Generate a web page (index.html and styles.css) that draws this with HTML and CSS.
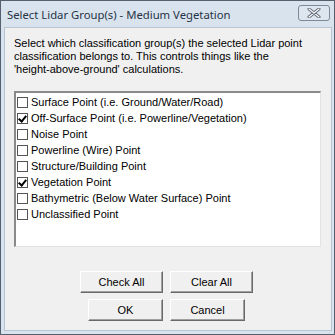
FILE: index.html
```html
<!DOCTYPE html>
<html lang="en">
  <head>
    <meta charset="UTF-8" />
    <title>Select Lidar Group(s) - Medium Vegetation</title>
    <link rel="stylesheet" href="styles.css">
  </head>
  <body>
    <div class="window">
      <div class="titlebar">
        <span class="title">Select Lidar Group(s) - Medium Vegetation</span>
        <span class="close">
          <svg width="14" height="10" viewBox="0 0 14 10">
            <path d="M2 1 L12 9 M12 1 L2 9" stroke="#5d6673" stroke-width="3" stroke-linecap="round"/>
            <path d="M2 1 L12 9 M12 1 L2 9" stroke="#fff" stroke-width="1.2" stroke-linecap="round"/>
          </svg>
        </span>
      </div>
      <div class="client">
        <p class="intro">Select which classification group(s) the selected Lidar point classification belongs to. This controls things like the 'height-above-ground' calculations.</p>
        <ul class="list">
          <li><span class="box"></span>Surface Point (i.e. Ground/Water/Road)</li>
          <li><span class="box checked"></span>Off-Surface Point (i.e. Powerline/Vegetation)</li>
          <li><span class="box"></span>Noise Point</li>
          <li><span class="box"></span>Powerline (Wire) Point</li>
          <li><span class="box"></span>Structure/Building Point</li>
          <li><span class="box checked"></span>Vegetation Point</li>
          <li><span class="box"></span>Bathymetric (Below Water Surface) Point</li>
          <li><span class="box"></span>Unclassified Point</li>
        </ul>
        <div class="buttons">
          <div class="row">
            <button class="wide">Check All</button>
            <button class="wide">Clear All</button>
          </div>
          <div class="row">
            <button class="narrow">OK</button>
            <button class="narrow">Cancel</button>
          </div>
        </div>
      </div>
    </div>
  </body>
</html>
```

FILE: styles.css
```css
* {
  margin: 0;
  padding: 0;
  box-sizing: border-box;
}
body {
  width: 335px;
  height: 335px;
  overflow: hidden;
  font-family: "Liberation Sans", Arial, sans-serif;
  font-size: 11px;
  color: #000;
}
.window {
  width: 335px;
  height: 335px;
  display: flex;
  flex-direction: column;
  background: #d9e3ee;
  border: 1px solid #55606e;
  padding: 0 2px 3px 3px;
}
.titlebar {
  height: 26px;
  display: flex;
  align-items: center;
  justify-content: space-between;
}
.title {
  font-family: "Noto Sans", "Open Sans", sans-serif;
  font-size: 11.3px;
  color: #263445;
  padding-left: 3px;
  padding-top: 1px;
}
.close {
  width: 32px;
  height: 16px;
  margin-right: 2px;
  margin-top: -2px;
  border: 1px solid #7d8898;
  border-radius: 3px;
  background: #dde5ef;
  display: flex;
  align-items: center;
  justify-content: center;
}
.client {
  flex: 1;
  background: #f0f0f0;
  border: 1px solid #b7c4d3;
  padding: 9px 0 0 9px;
}
.intro {
  width: 290px;
  line-height: 13px;
}
.list {
  list-style: none;
  width: 307px;
  height: 156px;
  margin-top: 15px;
  background: #fff;
  border-top: 2px solid #8a8a8a;
  border-left: 2px solid #8a8a8a;
  border-right: 1px solid #e3e3e3;
  border-bottom: 1px solid #e3e3e3;
  padding-top: 1px;
}
.list li {
  height: 16px;
  display: flex;
  align-items: center;
  white-space: nowrap;
}
.box {
  width: 11px;
  height: 11px;
  border: 1px solid #555;
  margin: 0 3px 0 1px;
  background: #fff;
  position: relative;
}
.box.checked::after {
  content: "";
  position: absolute;
  left: 2px;
  top: 0px;
  width: 3px;
  height: 6px;
  border-right: 2px solid #000;
  border-bottom: 2px solid #000;
  transform: rotate(40deg);
}
.buttons {
  display: flex;
  flex-direction: column;
  align-items: center;
  gap: 6px;
  margin-top: 24px;
  padding-right: 12px;
}
.row {
  display: flex;
  gap: 7px;
}
button {
  font-family: "Liberation Sans", Arial, sans-serif;
  font-size: 11px;
  background: #f0f0f0;
  height: 22px;
  border-top: 1px solid #fff;
  border-left: 1px solid #fff;
  border-right: 1px solid #696969;
  border-bottom: 1px solid #696969;
  box-shadow: inset -1px -1px 0 #a0a0a0;
}
.wide {
  width: 83px;
}
.narrow {
  width: 75px;
}
```
